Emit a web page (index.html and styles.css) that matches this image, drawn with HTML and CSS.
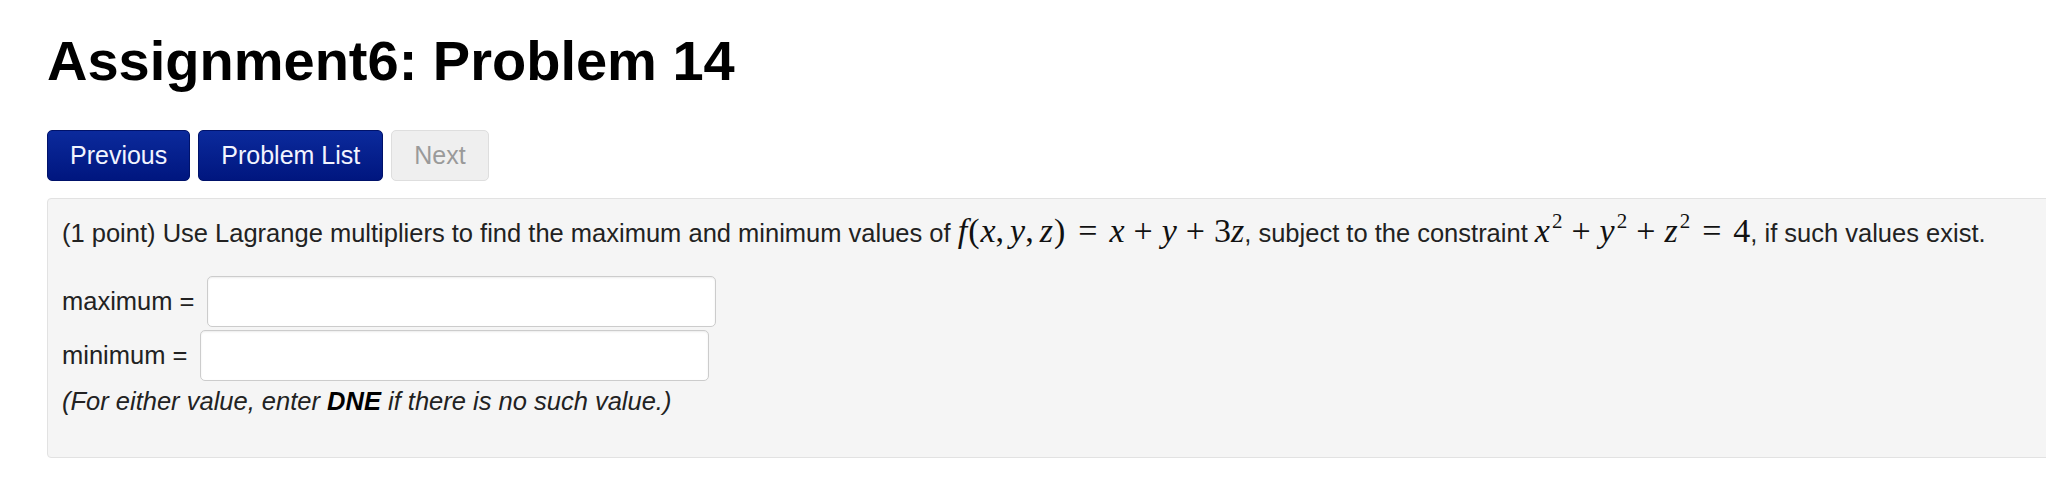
FILE: index.html
```html
<!DOCTYPE html>
<html lang="en">
<head>
<meta charset="utf-8">
<title>Assignment6: Problem 14</title>
<link rel="stylesheet" href="styles.css">
</head>
<body>
<div class="page">
  <h1 class="title">Assignment6: Problem 14</h1>
  <div class="nav">
    <button class="btn btn-primary" type="button">Previous</button>
    <button class="btn btn-primary" type="button">Problem List</button>
    <button class="btn btn-disabled" type="button" disabled>Next</button>
  </div>
  <div class="problem">
    <p class="statement">(1 point) Use Lagrange multipliers to find the maximum and minimum values of <span class="math"><i>f</i><span class="paren">(</span><i>x</i><span class="comma">,</span><i>y</i><span class="comma">,</span><i>z</i><span class="paren">)</span><span class="rel">=</span><i>x</i><span class="bin">+</span><i>y</i><span class="bin">+</span>3<i>z</i></span>, subject to the constraint <span class="math"><i>x</i><sup>2</sup><span class="bin">+</span><i>y</i><sup>2</sup><span class="bin">+</span><i>z</i><sup>2</sup><span class="rel">=</span>4</span>, if such values exist.</p>
    <div class="answer-row">
      <label class="answer-label" for="max">maximum =</label>
      <input class="answer-input answer-max" id="max" type="text">
    </div>
    <div class="answer-row">
      <label class="answer-label" for="min">minimum =</label>
      <input class="answer-input answer-min" id="min" type="text">
    </div>
    <p class="note">(For either value, enter <b>DNE</b> if there is no such value.)</p>
  </div>
</div>
</body>
</html>
```
FILE: styles.css
```css
html, body {
  margin: 0;
  padding: 0;
  background: #ffffff;
  overflow: hidden;
}

body {
  font-family: "Liberation Sans", Arial, sans-serif;
  color: #222222;
}

.page {
  padding: 30px 0 0 47px;
}

.title {
  margin: 0;
  font-size: 56px;
  line-height: 62px;
  font-weight: bold;
  color: #000000;
}

.nav {
  display: flex;
  gap: 8px;
  margin-top: 38px;
}

.btn {
  font-family: "Liberation Sans", Arial, sans-serif;
  font-size: 25px;
  line-height: 29px;
  padding: 10px 22px;
  border-radius: 5px;
  border: 1px solid transparent;
  margin: 0;
}

.btn-primary {
  color: #f2f4ff;
  background: linear-gradient(#0b2a9c, #00167f);
  border-color: #00126a;
}

.btn-disabled {
  color: #9a9a9a;
  background: #efefef;
  border-color: #dedede;
}

.problem {
  margin-top: 17px;
  margin-right: -20px;
  background: #f5f5f5;
  border: 1px solid #e2e2e2;
  border-radius: 4px;
  padding: 15px 14px 41px 14px;
  font-size: 25.5px;
}

.statement {
  margin: 0;
  line-height: 36px;
}

.math {
  font-family: "Liberation Serif", "Times New Roman", serif;
  font-size: 34px;
  line-height: 1;
  color: #111111;
}

.math i {
  font-style: italic;
}

.math sup {
  font-style: normal;
  font-size: 21px;
  line-height: 0;
  vertical-align: 14px;
  margin-left: 2px;
}

.paren {
  padding: 0 1px;
}

.comma {
  margin-right: 6px;
}

.rel {
  margin: 0 12px;
}

.bin {
  margin: 0 9px;
}

.answer-row {
  display: flex;
  align-items: center;
  height: 51px;
  margin-bottom: 3px;
}

.answer-row:first-of-type {
  margin-top: 25px;
}

.answer-label {
  margin-right: 13px;
  line-height: 29px;
}

.answer-input {
  box-sizing: border-box;
  height: 51px;
  width: 509px;
  margin: 0;
  border: 1px solid #cccccc;
  border-radius: 5px;
  background: #ffffff;
  box-shadow: inset 0 1px 2px rgba(0, 0, 0, 0.08);
  font-size: 25px;
}

.note {
  margin: 5px 0 0 0;
  line-height: 30px;
  font-style: italic;
}

.note b {
  font-weight: bold;
  color: #000000;
}
```
